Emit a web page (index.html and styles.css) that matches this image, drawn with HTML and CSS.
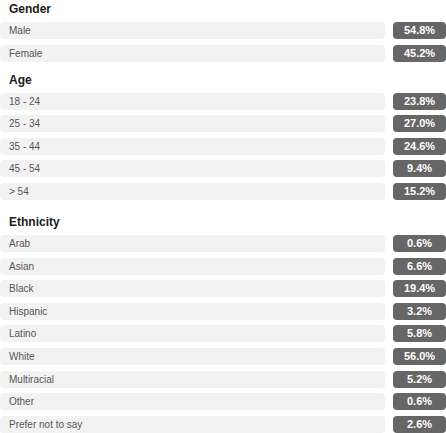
FILE: index.html
```html
<!DOCTYPE html>
<html>
<head>
<meta charset="utf-8">
<link rel="stylesheet" href="styles.css">
</head>
<body>
<div class="page">
  <section class="group">
    <h3 class="title">Gender</h3>
    <div class="rows">
      <div class="row"><div class="label">Male</div><div class="value">54.8%</div></div>
      <div class="row"><div class="label">Female</div><div class="value">45.2%</div></div>
    </div>
  </section>
  <section class="group">
    <h3 class="title">Age</h3>
    <div class="rows">
      <div class="row"><div class="label">18 - 24</div><div class="value">23.8%</div></div>
      <div class="row"><div class="label">25 - 34</div><div class="value">27.0%</div></div>
      <div class="row"><div class="label">35 - 44</div><div class="value">24.6%</div></div>
      <div class="row"><div class="label">45 - 54</div><div class="value">9.4%</div></div>
      <div class="row"><div class="label">&gt; 54</div><div class="value">15.2%</div></div>
    </div>
  </section>
  <section class="group group-wide">
    <h3 class="title">Ethnicity</h3>
    <div class="rows">
      <div class="row"><div class="label">Arab</div><div class="value">0.6%</div></div>
      <div class="row"><div class="label">Asian</div><div class="value">6.6%</div></div>
      <div class="row"><div class="label">Black</div><div class="value">19.4%</div></div>
      <div class="row"><div class="label">Hispanic</div><div class="value">3.2%</div></div>
      <div class="row"><div class="label">Latino</div><div class="value">5.8%</div></div>
      <div class="row"><div class="label">White</div><div class="value">56.0%</div></div>
      <div class="row"><div class="label">Multiracial</div><div class="value">5.2%</div></div>
      <div class="row"><div class="label">Other</div><div class="value">0.6%</div></div>
      <div class="row"><div class="label">Prefer not to say</div><div class="value">2.6%</div></div>
    </div>
  </section>
</div>
</body>
</html>
```

FILE: styles.css
```css
html, body {
  margin: 0;
  padding: 0;
  background: #ffffff;
}
body {
  font-family: "Liberation Sans", Arial, Helvetica, sans-serif;
}
.page {
  display: flex;
  flex-direction: column;
  gap: 9px;
  width: 446px;
}
.group-wide {
  margin-top: 4px;
}
.title {
  margin: 0 0 6px 0;
  padding: 2px 0 0 9px;
  font-size: 12px;
  line-height: 14px;
  font-weight: bold;
  color: #1a1a1a;
}
.rows {
  display: flex;
  flex-direction: column;
  gap: 5.6px;
}
.row {
  display: flex;
  gap: 8px;
  height: 17px;
}
.label {
  flex: 1;
  background: #f2f2f2;
  border-radius: 4px;
  padding-left: 9px;
  font-size: 10px;
  line-height: 17px;
  color: #555555;
}
.value {
  width: 53px;
  background: #666666;
  border-radius: 4px;
  color: #ffffff;
  font-size: 11px;
  font-weight: bold;
  line-height: 17px;
  text-align: center;
}
```
